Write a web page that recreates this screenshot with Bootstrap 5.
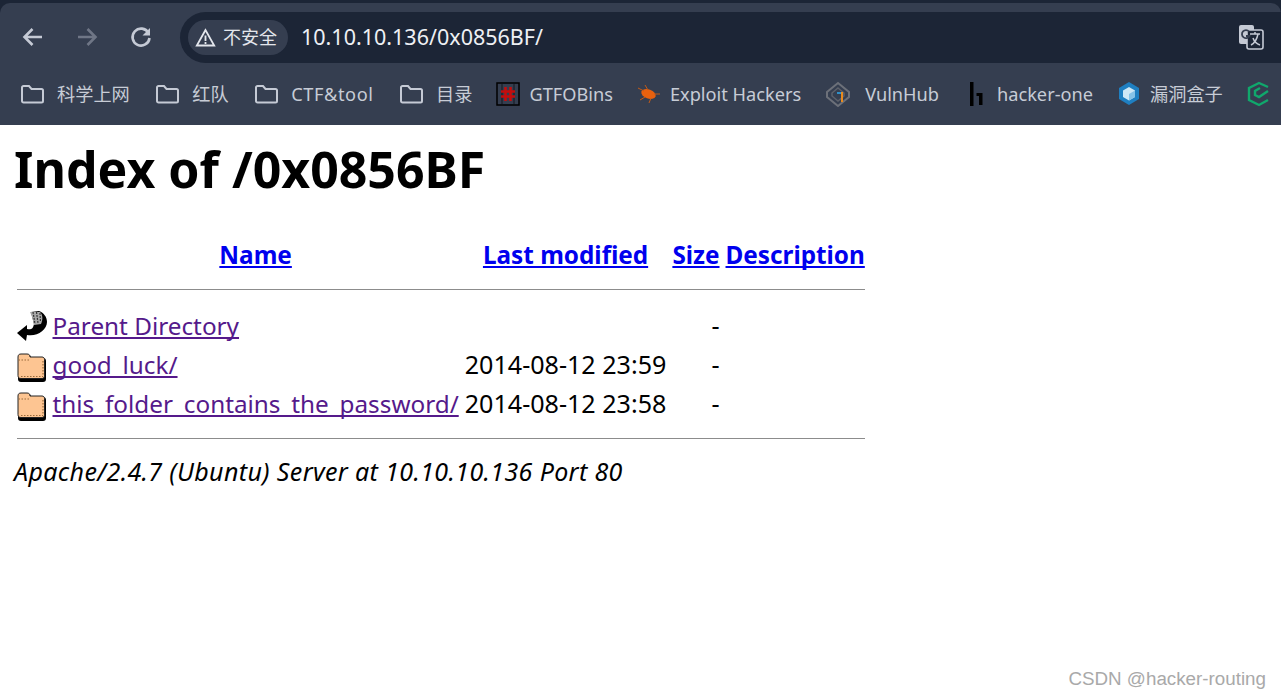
<!DOCTYPE html>
<html lang="zh">

<head>
  <meta charset="UTF-8" />
  <meta name="viewport" content="width=device-width, initial-scale=1" />
  <title>Index of /0x0856BF</title>
  <link href="https://cdn.jsdelivr.net/npm/bootstrap@5.3.3/dist/css/bootstrap.min.css" rel="stylesheet">
  <style>
    html, body { height: 100%; overflow: hidden; }
    body { font-family: "Noto Sans", "Noto Sans CJK SC", sans-serif; background: #fff; color: #000; }
    .chrome-top { background: #1c2536; padding-top: 3px; }
    .chrome-body { background: #353e50; border-radius: 10px 10px 0 0; height: 122px; }
    .tool-row { height: 59px; padding: 9px 0 0 18px; }
    .nav-ico { width: 30px; height: 30px; margin-right: 24px; }
    .addr { background: #1c2536; height: 51px; border-radius: 26px 0 0 26px; padding: 0 17px 0 8px; }
    .sec-pill { background: #353e50; height: 35px; border-radius: 18px; padding: 0 11px 0 7px; color: #e3e6ec; font-size: 18px; gap: 7px; }
    .addr-url { color: #eef0f4; font-size: 21.5px; margin-left: 13px; }
    .mark-row { height: 60px; padding: 6px 0 0 20px; color: #c7ccd6; font-size: 18.2px; white-space: nowrap; overflow: hidden; }
    .mark-item { gap: 9px; margin-right: 24px; }
    .mark-item svg { flex: none; margin-bottom: 2px; }
    .mark-dir { gap: 12px; margin-right: 25.5px; }
    .mark-wide { letter-spacing: .6px; }
    .mark-end { gap: 12px; }
    .mark-vuln { gap: 14px; margin-right: 29px; }
    .mark-one { margin-right: 25px; }
    .mark-box { gap: 10px; }
    .index-box { padding: 0 14px; }
    .index-title { font-size: 50px; font-weight: 700; line-height: 65px; margin: 12px 0 32px; }
    .index-tbl { font-size: 24.3px; border-collapse: separate; border-spacing: 3px; line-height: 36px; margin-left: -2px; }
    .index-tbl th { text-align: center; font-weight: 700; padding: 0 1.5px; }
    .index-tbl td { padding: 0 1.5px; white-space: nowrap; }
    .index-tbl a { color: #0000ee; text-decoration-skip-ink: none; }
    .index-tbl a.seen { color: #551a8b; }
    .index-tbl hr { margin: 13px 0 15px; border: 0; border-top: 1px solid #8c8c8c; opacity: 1; }
    .index-tbl .ico-cell { width: 33px; vertical-align: middle; }
    .index-tbl .ico-cell svg { display: block; }
    .index-tbl td.num-cell { text-align: right; font-size: 25.1px; line-height: 34px; padding-bottom: 2px; }
    .srv-line { font-size: 25px; letter-spacing: .37px; font-style: italic; line-height: 33px; margin: -2px 0 0; }
    .water { position: absolute; right: 15px; bottom: 5px; color: #a9a9a9; font-family: "Liberation Sans", sans-serif; font-size: 18.8px; }
  </style>
</head>

<body class="position-relative">
  <svg width="0" height="0" class="position-absolute">
    <symbol id="dirIco" viewBox="0 0 25 20"><path d="M2 17V3.500C2 2.700 2.700 2 3.500 2H9l2.500 3h10c.8 0 1.500.7 1.500 1.500V17c0 .8-.7 1.500-1.500 1.500h-18C2.700 18.500 2 17.800 2 17z" fill="none" stroke="#c5cad5" stroke-width="2"/></symbol>
    <symbol id="tanIco" viewBox="0 0 30 33"><path d="M2 9c0-2 1-3 3-3h6c2 0 3 1 3 3h12c2 0 3 1 3 3v18c0 2-1 3-3 3H4c-2 0-3-1-3-3z" fill="#000"/><path d="M1 8c0-2 1-3 3-3h6c2 0 3 1 3 3h12c1.500 0 2.500 1 2.500 2.500V27c0 1.500-1 2.500-2.500 2.500H4c-2 0-3-1-3-3z" fill="#fdc592" stroke="#222" stroke-width="1"/><path d="M1.500 11h12M4 27.500h22M26 12v14" stroke="#9a6c3c" stroke-width="1.200" stroke-dasharray="1.500 1.500" fill="none"/></symbol>
  </svg>
  <div class="chrome-top">
    <div class="chrome-body">
      <div class="tool-row d-flex align-items-center">
        <div class="d-flex align-items-center">
          <svg class="nav-ico" viewBox="0 0 30 30" fill="none" stroke="#c5cad5" stroke-width="2.600"><path d="M24 15H7M14.500 7L6.500 15l8 8"/></svg>
          <svg class="nav-ico" viewBox="0 0 30 30" fill="none" stroke="#6f7686" stroke-width="2.600"><path d="M6 15h17M15.500 7l8 8-8 8"/></svg>
          <svg class="nav-ico" viewBox="0 0 30 30" fill="none" stroke="#c5cad5" stroke-width="2.600"><path d="M22.500 11A8.500 8.500 0 1 0 23.500 16"/><path d="M24 6v7.500h-7.500z" fill="#c5cad5" stroke="none"/></svg>
        </div>
        <div class="addr flex-grow-1 d-flex align-items-center">
          <div class="sec-pill d-flex align-items-center">
            <svg width="21" height="19" viewBox="0 0 21 19" fill="none" stroke="#e3e6ec" stroke-width="1.800"><path d="M10.500 2L1.800 17.500h17.400z"/><path d="M10.500 7.500v5.500M10.500 14v2"/></svg>
            <span>不安全</span>
          </div>
          <span class="addr-url">10.10.10.136/0x0856BF/</span>
          <svg class="ms-auto" width="26" height="26" viewBox="0 0 26 26"><rect x="1" y="1" width="15" height="19" rx="2" fill="#c5cad5"/><rect x="9" y="6" width="16" height="19" rx="2" fill="#1c2536" stroke="#c5cad5" stroke-width="1.600"/><path d="M12 10h10M17 8v2M13 21c4-2 6-6 7-11M15 14c1 3 4 6 7 7" fill="none" stroke="#c5cad5" stroke-width="1.500"/><path d="M11 7.500A4 4 0 1 0 11.500 12H8" fill="none" stroke="#353e50" stroke-width="1.800"/></svg>
        </div>
      </div>
      <div class="mark-row d-flex align-items-center">
        <div class="mark-item mark-dir d-flex align-items-center"><svg width="25" height="20"><use href="#dirIco"/></svg><span>科学上网</span></div>
        <div class="mark-item mark-dir d-flex align-items-center"><svg width="25" height="20"><use href="#dirIco"/></svg><span>红队</span></div>
        <div class="mark-item mark-dir d-flex align-items-center"><svg width="25" height="20"><use href="#dirIco"/></svg><span class="mark-wide">CTF&amp;tool</span></div>
        <div class="mark-item mark-end d-flex align-items-center"><svg width="25" height="20"><use href="#dirIco"/></svg><span>目录</span></div>
        <div class="mark-item d-flex align-items-center"><svg width="24" height="24" viewBox="0 0 24 24"><rect x="1" y="1" width="22" height="22" fill="#353e50" stroke="#000" stroke-width="1.500"/><path d="M6 2v20M18 2v20" stroke="#15191f" stroke-width="1"/><path d="M9.500 5v14M14.500 5v14M5 9.500h14M5 14.500h14" stroke="#c40d0d" stroke-width="2.600"/></svg><span>GTFOBins</span></div>
        <div class="mark-item d-flex align-items-center"><svg width="24" height="20" viewBox="0 0 24 20"><ellipse cx="11.500" cy="10" rx="7.500" ry="4.500" fill="#e8610f" transform="rotate(20 11.500 10)"/><path d="M1 4l6 3M8 1l3 5M17 10h6M3 16l5-3M12 19l2-5" stroke="#c25a18" stroke-width="1" fill="none"/></svg><span>Exploit Hackers</span></div>
        <div class="mark-item mark-vuln d-flex align-items-center"><svg width="26" height="26" viewBox="0 0 26 26" fill="none"><path d="M13 2l11 9v5l-11 9L2 16v-5z" stroke="#6c7079" stroke-width="2"/><path d="M13 7l6 5v3l-6 5-6-5v-3z" stroke="#5e626b" stroke-width="1.500"/><path d="M12 12h4" stroke="#2f8fc7" stroke-width="2"/><path d="M17 11v10" stroke="#e88a1d" stroke-width="2"/></svg><span>VulnHub</span></div>
        <div class="mark-item mark-one d-flex align-items-center"><svg width="20" height="26" viewBox="0 0 20 26" fill="#000"><rect x="2" y="1" width="3.500" height="24"/><path d="M8.500 12h6v12h-3.500V15h-2.500z"/></svg><span>hacker-one</span></div>
        <div class="mark-item mark-box d-flex align-items-center"><svg width="22" height="25" viewBox="0 0 22 25"><path d="M11 1l10 6v11l-10 6-10-6V7z" fill="#1f7fc1"/><path d="M11 6l6 3.500v6.500l-6 3.500-6-3.500V9.500z" fill="#cfe8f6"/><path d="M11 13l6-3.500v6.500l-6 3.500z" fill="#86c3e8"/></svg><span>漏洞盒子</span></div>
        <div class="mark-item d-flex align-items-center"><svg width="24" height="26" viewBox="0 0 24 26" fill="none" stroke="#10a86c" stroke-width="2.400"><path d="M21 6L12 2 2 7v12l10 5 9-5"/><path d="M21 10l-9 6-4-2V10l5-3"/></svg></div>
      </div>
    </div>
  </div>

  <div class="index-box">
    <h1 class="index-title">Index of /0x0856BF</h1>
    <table class="index-tbl">
      <tr>
        <th></th>
        <th><a href="#">Name</a></th>
        <th><a href="#">Last modified</a></th>
        <th><a href="#">Size</a></th>
        <th><a href="#">Description</a></th>
      </tr>
      <tr><th colspan="5"><hr></th></tr>
      <tr>
        <td class="ico-cell"><svg width="30" height="33" viewBox="0 0 30 33"><path d="M0 23L10 15V19C14 20 16 19 17 14L14 2L22 1C27 3 30 7 30 12C30 20 20 27 10 25L9 31Z" fill="#000"/><path d="M13 2L23 2C26 5 26 10 24 14L17 15C16 10 15 6 13 2Z" fill="#a8a8a8"/><path d="M16 2l2 12M19.500 2l1.500 11M23 3l.5 9" stroke="#333" stroke-width="1.200" stroke-dasharray="2 1" fill="none"/></svg></td>
        <td><a class="seen" href="#">Parent Directory</a></td>
        <td class="num-cell"></td>
        <td class="num-cell">-</td>
        <td></td>
      </tr>
      <tr>
        <td class="ico-cell"><svg width="30" height="33"><use href="#tanIco"/></svg></td>
        <td><a class="seen" href="#">good_luck/</a></td>
        <td class="num-cell">2014-08-12 23:59</td>
        <td class="num-cell">-</td>
        <td></td>
      </tr>
      <tr>
        <td class="ico-cell"><svg width="30" height="33"><use href="#tanIco"/></svg></td>
        <td><a class="seen" href="#">this_folder_contains_the_password/</a></td>
        <td class="num-cell">2014-08-12 23:58</td>
        <td class="num-cell">-</td>
        <td></td>
      </tr>
      <tr><th colspan="5"><hr></th></tr>
    </table>
    <p class="srv-line">Apache/2.4.7 (Ubuntu) Server at 10.10.10.136 Port 80</p>
  </div>

  <div class="water">CSDN @hacker-routing</div>

  <script src="https://cdn.jsdelivr.net/npm/bootstrap@5.3.3/dist/js/bootstrap.bundle.min.js"></script>
</body>

</html>
